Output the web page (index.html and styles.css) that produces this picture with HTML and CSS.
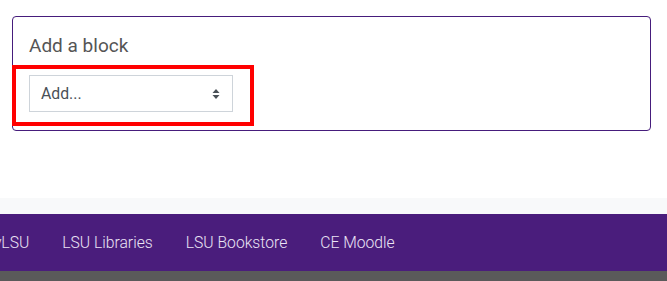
FILE: index.html
```html
<!DOCTYPE html>
<html lang="en">
<head>
    <meta charset="UTF-8">
    <title>Add a block</title>
    <link rel="stylesheet" href="styles.css">
</head>
<body>
    <div class="main">
        <div class="block-card">
            <h5 class="block-title">Add a block</h5>
            <div class="select-box">
                <span>Add...</span>
                <svg class="select-arrows" width="8" height="12" viewBox="0 0 8 12">
                    <path d="M4 1 L7.5 5 L0.5 5 Z" fill="#495057"/>
                    <path d="M4 11 L7.5 7 L0.5 7 Z" fill="#495057"/>
                </svg>
            </div>
            <div class="highlight"></div>
        </div>
    </div>

    <div class="footer-strip"></div>
    <nav class="footer-nav">
        <a href="#">myLSU</a>
        <a href="#">LSU Libraries</a>
        <a href="#">LSU Bookstore</a>
        <a href="#">CE Moodle</a>
    </nav>
    <div class="footer-bottom"></div>
</body>
</html>
```

FILE: styles.css
```css
body {
    margin: 0;
    font-family: Roboto, "Liberation Sans", sans-serif;
    background: #fff;
    overflow: hidden;
}
.main {
    padding: 16px 16px 0 12px;
    height: 198px;
    box-sizing: border-box;
}
.block-card {
    position: relative;
    width: 639px;
    height: 115px;
    box-sizing: border-box;
    border: 1px solid #461d7c;
    border-radius: 4px;
    padding: 15px 16px 0 16px;
}
.block-title {
    margin: 0;
    font-size: 19px;
    font-weight: 400;
    color: #555;
    line-height: 28px;
}
.select-box {
    margin-top: 15px;
    width: 204px;
    height: 37px;
    box-sizing: border-box;
    border: 1px solid #ced4da;
    display: flex;
    align-items: center;
    justify-content: space-between;
    padding: 0 12px 0 11px;
    font-size: 15.8px;
    color: #495057;
}
.select-arrows {
    display: block;
}
.highlight {
    position: absolute;
    left: -1px;
    top: 48px;
    width: 242px;
    height: 61px;
    box-sizing: border-box;
    border: 4px solid #ff0000;
}
.footer-strip {
    height: 16px;
    background: #f8f9fa;
}
.footer-nav {
    height: 57px;
    background: #4a1d7c;
    display: flex;
    align-items: center;
    gap: 33px;
    margin-left: -20px;
}
.footer-nav a {
    color: #ebe4f5;
    text-decoration: none;
    font-size: 15.7px;
    font-weight: 300;
}
.footer-bottom {
    height: 10px;
    background: #5a5a5a;
}
```
